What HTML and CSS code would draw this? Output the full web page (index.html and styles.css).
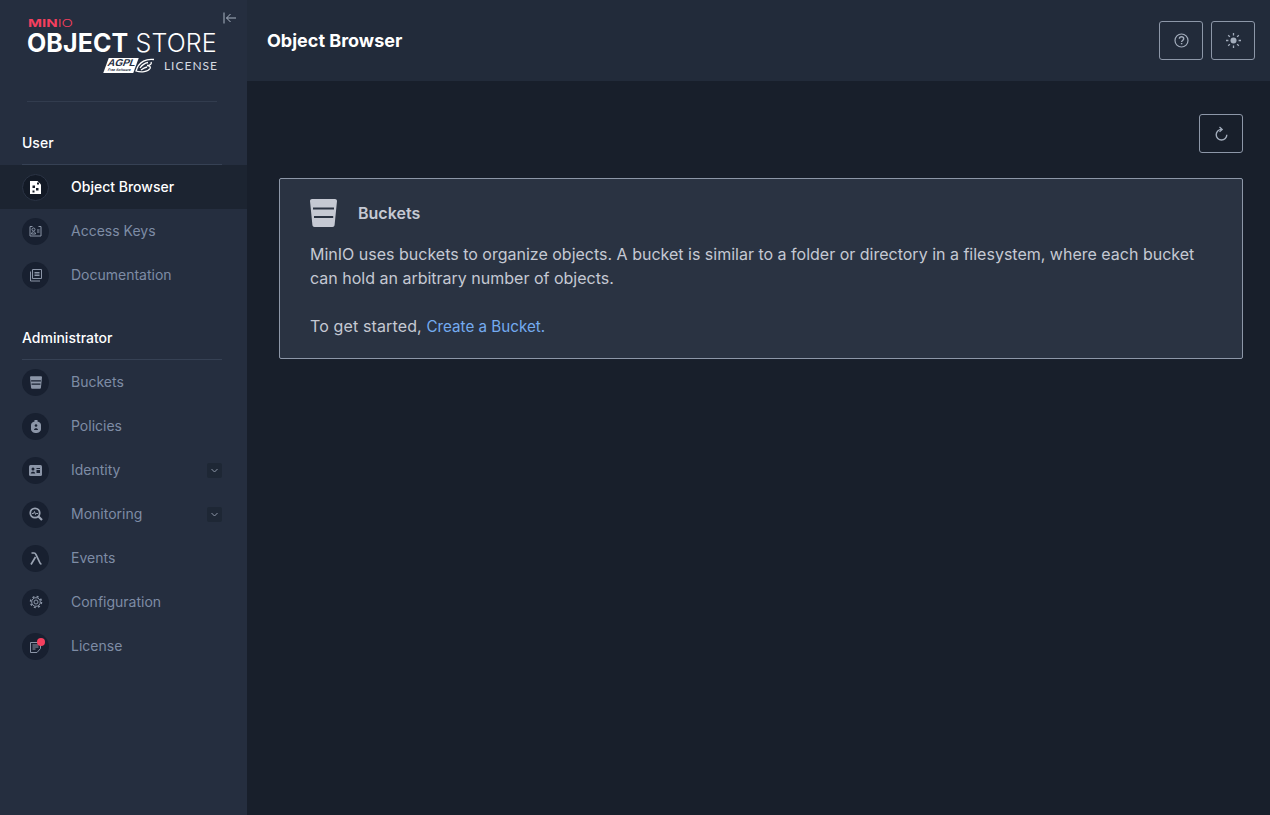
FILE: index.html
```html
<!DOCTYPE html>
<html lang="en">
<head>
  <meta charset="UTF-8">
  <title>MinIO Console</title>
  <link rel="stylesheet" href="styles.css">
</head>
<body>
  <div class="container">
    <!-- Sidebar -->
    <aside class="sidebar">
      <button class="collapse" aria-label="Collapse">
        <svg width="14" height="12" viewBox="0 0 14 12" fill="none" stroke="#a9b3c2" stroke-width="1"><path d="M1 .5v11M13 6H3.5M7.5 2 3.5 6l4 4"/></svg>
      </button>
      <div class="logo">
        <div class="logo-brand"><b>MIN</b>IO</div>
        <div class="logo-name"><b>OBJECT</b> STORE</div>
        <div class="logo-license">
          <span class="agpl"><span class="agpl-text">AGPL</span><span class="agpl-small">Free Software</span></span>
          <svg class="agpl-wing" width="20" height="15" viewBox="0 0 20 15" fill="none" stroke="#fff" stroke-width="1.3"><path d="M19 1.500C12 .5 4 3 1 13c5 1.500 12 1 14-2.500 1-2-1-3-3-3 3 0 5-1.500 4-3.500M5 10c2-3 5-5 8-5.500M6 12c2-1.500 4-2.500 6-3"/></svg>
          <span class="license-text">LICENSE</span>
        </div>
      </div>
      <div class="logo-rule"></div>

      <div class="group-title">User</div>
      <nav class="menu">
        <a class="item active">
          <span class="ico"><svg width="11" height="13" viewBox="0 0 11 13"><path fill="#fff" d="M0 0h7.500L11 3.500V13H0z"/><path fill="#131a26" d="M7 1.500h2v2H7zM2.500 4.500H5V7H2.500zM6 7h2.500v2.500H6zM2.500 9.500h2v2h-2z"/></svg></span>
          <span class="label">Object Browser</span>
        </a>
        <a class="item">
          <span class="ico"><svg width="13" height="12" viewBox="0 0 13 12" fill="none" stroke="#8b95a7"><path d="M3.500 1.500H1v9.500h11V1.500H9.500"/><circle cx="4.500" cy="4.500" r="1.500"/><path d="M2.500 9c0-3 4-3 4 0z"/><path d="M8 5h2.500M8 7h2.500"/></svg></span>
          <span class="label">Access Keys</span>
        </a>
        <a class="item">
          <span class="ico"><svg width="13" height="13" viewBox="0 0 13 13" fill="none" stroke="#8b95a7"><path d="M3.500.5h9v9h-9zM5.500 3.500h5M5.500 5h5M5.500 6.500h5"/><path d="M1.500 2.500V12H11"/></svg></span>
          <span class="label">Documentation</span>
        </a>
      </nav>

      <div class="group-title">Administrator</div>
      <nav class="menu">
        <a class="item">
          <span class="ico"><svg width="12" height="13" viewBox="0 0 27 28"><path fill="#8b95a7" d="M0 2C0 .9.900 0 2 0h23c1.100 0 2 .9 2 2l-2.400 24c-.1 1.100-1 2-2.100 2h-18c-1.100 0-2-.9-2.100-2z"/><path fill="#182030" d="M2.500 9h22v2.500h-22zM3.500 16.500h20V19h-20z"/></svg></span>
          <span class="label">Buckets</span>
        </a>
        <a class="item">
          <span class="ico"><svg width="10" height="13" viewBox="0 0 10 13"><path fill="#8b95a7" d="M3.500 0h3v1.500C8.500 2 10 3 10 5v4c0 2.500-2.500 4-5 4s-5-1.500-5-4V5c0-2 1.500-3 3.500-3.500z"/><circle cx="5" cy="5.500" r="1.300" fill="#182030"/><path fill="#182030" d="M3 10c0-2.500 4-2.500 4 0z"/></svg></span>
          <span class="label">Policies</span>
        </a>
        <a class="item">
          <span class="ico"><svg width="13" height="11" viewBox="0 0 13 11"><rect width="13" height="11" rx="1.500" fill="#8b95a7"/><circle cx="4" cy="4" r="1.500" fill="#182030"/><path fill="#182030" d="M1.800 8.500c0-2.500 4.400-2.500 4.400 0zM7.500 3H11v1H7.500zM7.500 5H11v3H7.500z"/></svg></span>
          <span class="label">Identity</span>
          <span class="chevron"><svg width="7" height="5" viewBox="0 0 7 5" fill="none" stroke="#8b95a7"><path d="M.5 1 3.500 4l3-3"/></svg></span>
        </a>
        <a class="item">
          <span class="ico"><svg width="14" height="14" viewBox="0 0 14 14" fill="none" stroke="#9aa3b3" stroke-width="1.800"><circle cx="6" cy="6" r="4.700"/><path stroke-width="2.200" d="m9.500 9.500 3.500 3.500"/><path stroke-width="1" d="M3 6.500h1.500l1-2 1 3 .7-1H9"/></svg></span>
          <span class="label">Monitoring</span>
          <span class="chevron"><svg width="7" height="5" viewBox="0 0 7 5" fill="none" stroke="#8b95a7"><path d="M.5 1 3.500 4l3-3"/></svg></span>
        </a>
        <a class="item">
          <span class="ico"><svg width="12" height="13" viewBox="0 0 12 13" fill="none" stroke="#9aa3b3" stroke-width="1.700"><path d="M1.500 1H4c1 0 1.500.5 2 1.600L10 11c.3.700.7 1 1.500 1M5.500 5 1 12.500"/></svg></span>
          <span class="label">Events</span>
        </a>
        <a class="item">
          <span class="ico"><svg width="14" height="14" viewBox="0 0 14 14" fill="none" stroke="#8b95a7"><circle cx="7" cy="7" r="2"/><circle cx="7" cy="7" r="4.300"/><circle cx="7" cy="7" r="5.500" stroke-dasharray="2 2.320" stroke-width="1.500"/></svg></span>
          <span class="label">Configuration</span>
        </a>
        <a class="item">
          <span class="ico"><svg class="license-ico" width="11" height="11" viewBox="0 0 11 11" fill="none" stroke="#8b95a7"><path d="M.5.5h10v6l-3.500 4H.5zM2.500 3h6M2.500 5h6M2.500 7h3"/></svg><span class="badge"></span></span>
          <span class="label">License</span>
        </a>
      </nav>
    </aside>

    <!-- Main column -->
    <div class="main">
      <header class="topbar">
        <h1>Object Browser</h1>
        <div class="top-actions">
          <button class="icon-btn">
            <svg width="15" height="15" viewBox="0 0 15 15" fill="none" stroke="#a3adbc" stroke-width="1.200"><circle cx="7.500" cy="7.500" r="6.500"/><path stroke-width="1.400" d="M5.400 5.800c0-2.800 4.300-2.800 4.300 0 0 1.700-2.100 1.600-2.100 3.100"/><path stroke-width="1.500" d="M7.600 10v1.300"/></svg>
          </button>
          <button class="icon-btn">
            <svg width="15" height="15" viewBox="0 0 15 15" fill="#a3adbc" stroke="#a3adbc" stroke-width="1.300"><circle cx="7.500" cy="7.500" r="3" stroke="none"/><path d="M7.500 0v2.400M7.500 12.600V15M0 7.500h2.400M12.600 7.500H15M2.200 2.200l1.700 1.700M11.100 11.100l1.700 1.700M2.200 12.800l1.700-1.700M11.100 3.900l1.700-1.700"/></svg>
          </button>
        </div>
      </header>

      <main class="content">
        <div class="content-actions">
          <button class="icon-btn">
            <svg width="13" height="15" viewBox="0 0 13 15" fill="none" stroke="#a3adbc" stroke-width="1.400"><path d="M11.800 8.700A5.300 5.300 0 1 1 6.500 3.400"/><path d="M4.500 1 7.200 3.400 4.500 5.800" stroke-width="1.300"/></svg>
          </button>
        </div>
        <section class="help-box">
          <div class="help-title">
            <svg width="27" height="28" viewBox="0 0 27 28"><path fill="#c5c9d3" d="M0 2C0 .9.900 0 2 0h23c1.100 0 2 .9 2 2l-2.400 24c-.1 1.100-1 2-2.100 2h-18c-1.100 0-2-.9-2.100-2z"/><path fill="#2a3342" d="M3 8.500h21v2H3zM4 17h19.200v2H4z"/></svg>
            <span>Buckets</span>
          </div>
          <p>MinIO uses buckets to organize objects. A bucket is similar to a folder or directory in a filesystem, where each bucket can hold an arbitrary number of objects.</p>
          <p class="started">To get started, <a href="#">Create a Bucket.</a></p>
        </section>
      </main>
    </div>
  </div>
</body>
</html>
```

FILE: styles.css
```css
* {
  box-sizing: border-box;
}

body {
  margin: 0;
  height: 815px;
  overflow: hidden;
  font-family: Inter, "Liberation Sans", sans-serif;
  background-color: #181f2b;
}

.container {
  display: flex;
  height: 100%;
}

.sidebar {
  position: relative;
  width: 247px;
  flex-shrink: 0;
  background-color: #252e3f;
  padding-top: 18px;
}

.collapse {
  position: absolute;
  top: 12px;
  left: 223px;
  padding: 0;
  border: 0;
  background: none;
  display: flex;
}

.logo {
  height: 82px;
  margin-left: 27px;
  width: 191px;
  color: #fff;
}

.logo-brand {
  margin-left: 1px;
  font-size: 10px;
  line-height: 10px;
  color: #f43f5e;
  font-weight: 300;
  transform: scaleX(1.500);
  transform-origin: left;
}

.logo-brand b {
  font-weight: 700;
}

.logo-name {
  font-size: 25px;
  line-height: 25px;
  margin-top: 3px;
  white-space: nowrap;
  font-weight: 300;
  letter-spacing: 0.1px;
}

.logo-name b {
  font-weight: 700;
}

.logo-license {
  display: flex;
  align-items: center;
  justify-content: flex-end;
  height: 16px;
  margin-top: 1px;
}

.agpl {
  display: block;
  background-color: #fff;
  transform: skewX(-20deg);
  width: 30px;
  height: 15px;
  text-align: center;
  color: #252e3f;
  font-family: "Liberation Sans", sans-serif;
  font-weight: bold;
}

.agpl-text {
  display: block;
  font-size: 10px;
  line-height: 10px;
}

.agpl-small {
  display: block;
  font-size: 3.500px;
  line-height: 4px;
  white-space: nowrap;
}

.agpl-wing {
  margin-left: -1px;
}

.license-text {
  font-family: Lato, sans-serif;
  font-size: 12px;
  letter-spacing: 1px;
  color: #d6dae1;
  margin-left: 9px;
}

.logo-rule {
  height: 1px;
  margin: 1px 30px 0 27px;
  background-color: #323c4e;
}

.group-title {
  margin: 32px 25px 0 22px;
  height: 31px;
  font-size: 14px;
  font-weight: 450;
  line-height: 17px;
  color: #fff;
  border-bottom: 1px solid #364154;
}

.menu {
  display: flex;
  flex-direction: column;
}

.item {
  display: flex;
  align-items: center;
  height: 44px;
  padding: 0 25px 0 22px;
  font-size: 14px;
  color: #7e8ca5;
}

.item.active {
  background-color: #1c2431;
  color: #fff;
  font-weight: 450;
}

.ico {
  position: relative;
  display: flex;
  align-items: center;
  justify-content: center;
  width: 27px;
  height: 27px;
  border-radius: 50%;
  background-color: #182030;
  margin-right: 22px;
}

.item.active .ico {
  background-color: #131a26;
  border: 1px solid #2b3445;
}

.label {
  flex: 1;
  padding-bottom: 2px;
}

.chevron {
  display: flex;
  align-items: center;
  justify-content: center;
  width: 15px;
  height: 15px;
  border-radius: 2px;
  background-color: #1e2735;
}

.license-ico {
  margin: 2px 0 0 -1px;
}

.badge {
  position: absolute;
  top: 5px;
  left: 15px;
  width: 8px;
  height: 8px;
  border-radius: 50%;
  background-color: #f43f5e;
}

.main {
  flex: 1;
  display: flex;
  flex-direction: column;
}

.topbar {
  display: flex;
  align-items: center;
  justify-content: space-between;
  height: 81px;
  padding: 0 15px 0 20px;
  background-color: #222b3a;
}

h1 {
  margin: 0;
  font-size: 18px;
  font-weight: 700;
  color: #fff;
}

.top-actions {
  display: flex;
  gap: 8px;
}

.icon-btn {
  display: flex;
  align-items: center;
  justify-content: center;
  width: 44px;
  height: 39px;
  padding: 0;
  background: transparent;
  border: 1px solid #8d97a8;
  border-radius: 3px;
}

.content {
  padding: 33px 27px 0 32px;
}

.content-actions {
  display: flex;
  justify-content: flex-end;
  margin-bottom: 25px;
}

.help-box {
  height: 181px;
  padding: 20px 30px 0;
  background-color: #2a3342;
  border: 1px solid #8d97a8;
  border-radius: 2px;
  font-size: 16px;
  line-height: 24px;
  color: #c5c9d3;
}

.help-title {
  display: flex;
  align-items: center;
  gap: 21px;
  height: 28px;
  font-weight: 600;
}

.help-box p {
  margin: 15px 0 0;
}

.help-box p.started {
  margin-top: 24px;
  letter-spacing: 0.13px;
}

.help-box a {
  font-size: 15.200px;
  letter-spacing: 0;
  color: #74abf0;
  text-decoration: none;
}
```
